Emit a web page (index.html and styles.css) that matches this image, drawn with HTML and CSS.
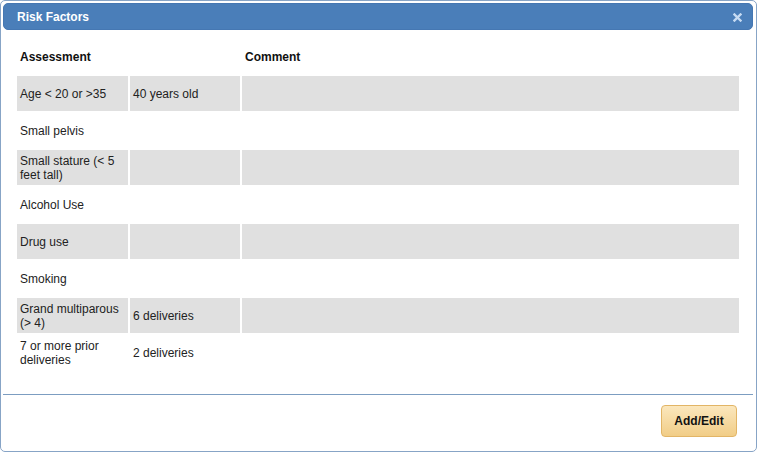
FILE: index.html
```html
<!DOCTYPE html>
<html lang="en">
<head>
  <meta charset="UTF-8">
  <title>Risk Factors</title>
  <link rel="stylesheet" href="styles.css">
</head>
<body>

  <div class="dialog">
    <div class="titlebar">
      <span class="title">Risk Factors</span>
      <span class="close">
        <svg width="9" height="9" viewBox="0 0 9 9">
          <path d="M1.5 1.5 L7.5 7.5 M7.5 1.5 L1.5 7.5" stroke="#c6dbf3" stroke-width="2.4" stroke-linecap="square"/>
        </svg>
      </span>
    </div>

    <div class="content">
      <table class="risk-table">
        <thead>
          <tr>
            <th class="col-name">Assessment</th>
            <th class="col-value"></th>
            <th>Comment</th>
          </tr>
        </thead>
        <tbody>
          <tr class="shaded"><td>Age &lt; 20 or &gt;35</td><td>40 years old</td><td></td></tr>
          <tr><td>Small pelvis</td><td></td><td></td></tr>
          <tr class="shaded"><td>Small stature (&lt; 5 feet tall)</td><td></td><td></td></tr>
          <tr><td>Alcohol Use</td><td></td><td></td></tr>
          <tr class="shaded"><td>Drug use</td><td></td><td></td></tr>
          <tr><td>Smoking</td><td></td><td></td></tr>
          <tr class="shaded"><td>Grand multiparous (&gt; 4)</td><td>6 deliveries</td><td></td></tr>
          <tr><td>7 or more prior deliveries</td><td>2 deliveries</td><td></td></tr>
        </tbody>
      </table>
    </div>

    <div class="footer">
      <button class="btn">Add/Edit</button>
    </div>
  </div>

</body>
</html>
```

FILE: styles.css
```css
/* Page */
body {
  margin: 0;
  padding: 0;
  font-family: 'Liberation Sans', Arial, sans-serif;
  font-size: 12px;
  color: #222;
  background: #fff;
}

/* Dialog frame */
.dialog {
  box-sizing: border-box;
  width: 757px;
  height: 452px;
  border: 1px solid #87a4c6;
  border-radius: 5px;
  padding: 2px 3px 2px 2px;
  display: flex;
  flex-direction: column;
  background: #fff;
}

/* Title bar */
.titlebar {
  height: 27px;
  background: #4a7eb9;
  border: 1px solid #4577b2;
  box-sizing: border-box;
  border-radius: 5px;
  display: flex;
  align-items: center;
  justify-content: space-between;
  padding: 0 10px 0 13px;
}
.title {
  color: #fff;
  font-weight: bold;
  font-size: 12px;
}
.close {
  display: flex;
  width: 9px;
  height: 9px;
  margin-top: 1px;
}

/* Table area */
.content {
  flex: 1;
  padding: 7px 11px 0 12px;
}
.risk-table {
  border-collapse: separate;
  border-spacing: 2px;
  width: 726px;
  table-layout: fixed;
}
.risk-table th,
.risk-table td {
  height: 35px;
  padding: 0 3px;
  text-align: left;
  vertical-align: middle;
  line-height: 14px;
  box-sizing: border-box;
}
.risk-table th {
  color: #111;
  font-weight: bold;
}
.col-name { width: 111px; }
.col-value { width: 110px; }
.risk-table tr.shaded td {
  background: #e0e0e0;
}

/* Footer with button */
.footer {
  border-top: 1px solid #7c9dc1;
  padding: 10px 16px 0 0;
  height: 44px;
  display: flex;
  justify-content: flex-end;
  align-items: flex-start;
}
.btn {
  width: 76px;
  height: 32px;
  font-family: 'Liberation Sans', Arial, sans-serif;
  font-size: 12px;
  font-weight: bold;
  color: #111;
  background: linear-gradient(#fbe7bd, #f1cd87);
  border: 1px solid #e2b566;
  border-radius: 4px;
  cursor: pointer;
}
```
